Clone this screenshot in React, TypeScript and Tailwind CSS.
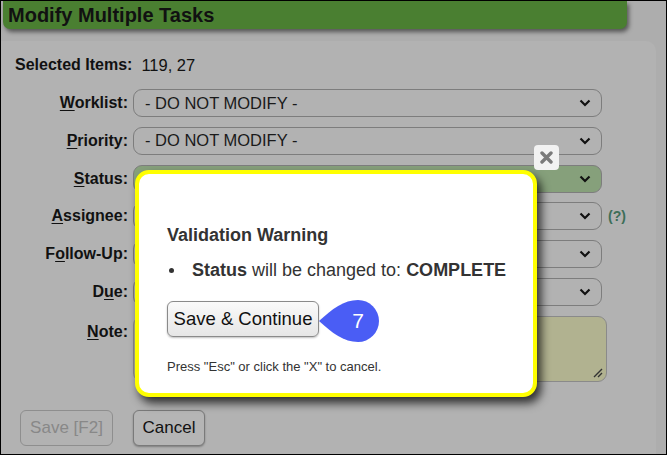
const rows = [
  { pre: "", u: "W", post: "orklist:", value: "- DO NOT MODIFY -" },
  { pre: "", u: "P", post: "riority:", value: "- DO NOT MODIFY -" },
  { pre: "", u: "S", post: "tatus:", value: "", status: true },
  { pre: "", u: "A", post: "ssignee:", value: "", help: true },
  { pre: "F", u: "o", post: "llow-Up:", value: "" },
  { pre: "D", u: "u", post: "e:", value: "" },
];

const Chevron = () => (
  <svg width="12" height="8" viewBox="0 0 12 8" className="shrink-0">
    <path d="M1.5 1.5 L6 6 L10.5 1.5" fill="none" stroke="#111" strokeWidth="2.2" />
  </svg>
);

const App = () => {
  return (
    <div className="relative h-[455px] w-[667px] overflow-hidden border border-black bg-[#adadad] font-['Liberation_Sans',Arial,sans-serif]">
      {/* title bar */}
      <div className="ml-[2px] h-[28px] w-[624px] rounded-b-[7px] bg-[#4a7f31] pl-[5px] text-[20px] leading-[28px] font-bold text-[#111] shadow-[2px_3px_4px_rgba(0,0,0,0.5)]">
        Modify Multiple Tasks
      </div>

      <div className="mt-[12px] h-[420px] w-[655px] rounded-tr-[10px] bg-[#b2b2b2] pt-[15px]">
        <div className="flex h-[18px] items-center">
          <span className="pl-[14px] text-[16px] font-bold whitespace-nowrap text-[#111]">
            Selected Items:
          </span>
          <span className="ml-[9px] text-[16.5px] text-[#111]">119, 27</span>
        </div>

        <div className="mt-[15px] flex flex-col gap-[9.8px]">
          {rows.map((r, i) => (
            <div key={i} className="flex h-[28px] items-center">
              <div className="w-[127px] text-right text-[16px] font-bold text-[#111]">
                {r.pre}
                <span className="underline underline-offset-2">{r.u}</span>
                {r.post}
              </div>
              <div
                className={`ml-[5px] flex h-[28px] w-[469px] items-center justify-between rounded-[9px] border border-[#7d7d7d] pr-[10px] pl-[11px] text-[16.5px] text-[#1a1a1a] ${
                  r.status ? "bg-[#86a07b]" : "bg-[#b2b2b2]"
                }`}
              >
                <span>{r.value}</span>
                <Chevron />
              </div>
              {r.help && (
                <span className="ml-[6px] text-[14px] font-bold text-[#3d6e58]">(?)</span>
              )}
            </div>
          ))}

          <div className="flex h-[66px] items-start">
            <div className="w-[127px] pt-[4px] text-right text-[16px] font-bold text-[#111]">
              <span className="underline underline-offset-2">N</span>ote:
            </div>
            <div className="relative ml-[5px] h-[66px] w-[474px] rounded-[9px] border border-[#8a8a8a] bg-[#b1b290]">
              <svg width="10" height="10" viewBox="0 0 10 10" className="absolute right-[3px] bottom-[3px]">
                <path d="M1 9 L9 1 M5 9 L9 5" stroke="#333" strokeWidth="1.4" />
              </svg>
            </div>
          </div>
        </div>

        <div className="mt-[28px] flex gap-[20px] pl-[19px]">
          <div className="flex h-[36px] w-[93px] items-center justify-center rounded-[6px] border border-[#8e8e8e] bg-[#b2b2b2] text-[17px] text-[#888]">
            Save [F2]
          </div>
          <div className="flex h-[36px] w-[72px] items-center justify-center rounded-[6px] border border-[#7a7a7a] bg-[#b5b5b5] text-[17px] text-[#111] shadow-[0_1px_2px_rgba(0,0,0,0.3)]">
            Cancel
          </div>
        </div>
      </div>

      {/* dialog */}
      <div className="absolute top-[169px] left-[134px] h-[227px] w-[402px] rounded-[14px] border-4 border-[#ffff00] bg-white pt-[50px] pl-[28px] text-[#333] shadow-[4px_6px_10px_rgba(0,0,0,0.75)]">
        <div className="text-[18px] leading-[22px] font-bold">Validation Warning</div>
        <div className="mt-[13px] flex items-center text-[18px] leading-[22px]">
          <span className="ml-[2px] h-[5px] w-[5px] rounded-full bg-[#333]" />
          <span className="ml-[18px]">
            <b>Status</b> will be changed to: <b>COMPLETE</b>
          </span>
        </div>
        <div className="mt-[20px] flex h-[36px] w-[152px] items-center justify-center rounded-[6px] border border-[#8a8a8a] bg-gradient-to-b from-[#fafafa] to-[#e6e6e6] text-[18.5px] text-[#111] shadow-[0_1px_2px_rgba(0,0,0,0.25)]">
          Save &amp; Continue
        </div>
        <div className="mt-[20px] text-[13px] text-[#333]">
          Press &quot;Esc&quot; or click the &quot;X&quot; to cancel.
        </div>
      </div>

      {/* close button */}
      <div className="absolute top-[144px] left-[533px] flex h-[25px] w-[25px] items-center justify-center rounded-[4px] bg-[#f2f2f2]">
        <svg width="13" height="13" viewBox="0 0 13 13">
          <path d="M2 2 L11 11 M11 2 L2 11" stroke="#7a7a7a" strokeWidth="3.4" strokeLinecap="round" />
        </svg>
      </div>

      {/* step callout */}
      <div className="absolute top-[299px] left-[317px] h-[42px] w-[62px]">
        <svg width="62" height="42" viewBox="0 0 62 42" className="absolute inset-0">
          <path d="M1 21 C14 9 26 0 40 0 A21 21 0 0 1 40 42 C26 42 14 33 1 21 Z" fill="#4a5df5" />
        </svg>
        <span className="absolute top-0 left-[28px] flex h-[42px] w-[24px] items-center justify-center text-[21px] text-white">
          7
        </span>
      </div>
    </div>
  );
};

export default App;
